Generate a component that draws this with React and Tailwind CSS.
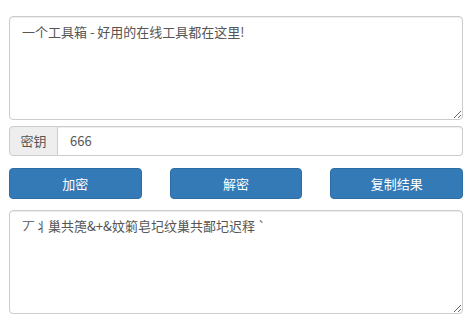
const App = () => {
  return (
    <div
      className="w-[474px] h-[322px] bg-white pl-[9px] pr-[11px] pt-[16px] text-[13px] text-[#555]"
      style={{ fontFamily: '"Microsoft YaHei", "Noto Sans CJK SC", "Liberation Sans", sans-serif' }}
    >
      <textarea
        className="block w-full h-[104px] resize-y rounded border border-[#ccc] px-[12px] py-[5px] leading-[20px] text-[#555] outline-none shadow-[inset_0_1px_1px_rgba(0,0,0,0.075)]"
        defaultValue="一个工具箱 - 好用的在线工具都在这里!"
      />

      <div className="mt-[6px] flex h-[30px]">
        <span className="flex w-[49px] items-center justify-center rounded-l border border-[#ccc] bg-[#eee] text-[#555]">
          密钥
        </span>
        <input
          className="flex-1 rounded-r border border-l-0 border-[#ccc] px-[12px] text-[#555] outline-none shadow-[inset_0_1px_1px_rgba(0,0,0,0.075)]"
          defaultValue="666"
        />
      </div>

      <div className="mt-[12px] grid grid-cols-3 gap-[28px]">
        <button className="h-[31px] rounded border border-[#2e6da4] bg-[#337ab7] text-white">加密</button>
        <button className="h-[31px] rounded border border-[#2e6da4] bg-[#337ab7] text-white">解密</button>
        <button className="h-[31px] rounded border border-[#2e6da4] bg-[#337ab7] text-white">复制结果</button>
      </div>

      <textarea
        className="mt-[11px] block w-full h-[104px] resize-y rounded border border-[#ccc] px-[12px] py-[5px] leading-[20px] text-[#555] outline-none shadow-[inset_0_1px_1px_rgba(0,0,0,0.075)]"
        defaultValue="丆丬巢共箎&+&妏箣皂圮纹巢共鄙圮迟释 `"
      />
    </div>
  );
};

export default App;
